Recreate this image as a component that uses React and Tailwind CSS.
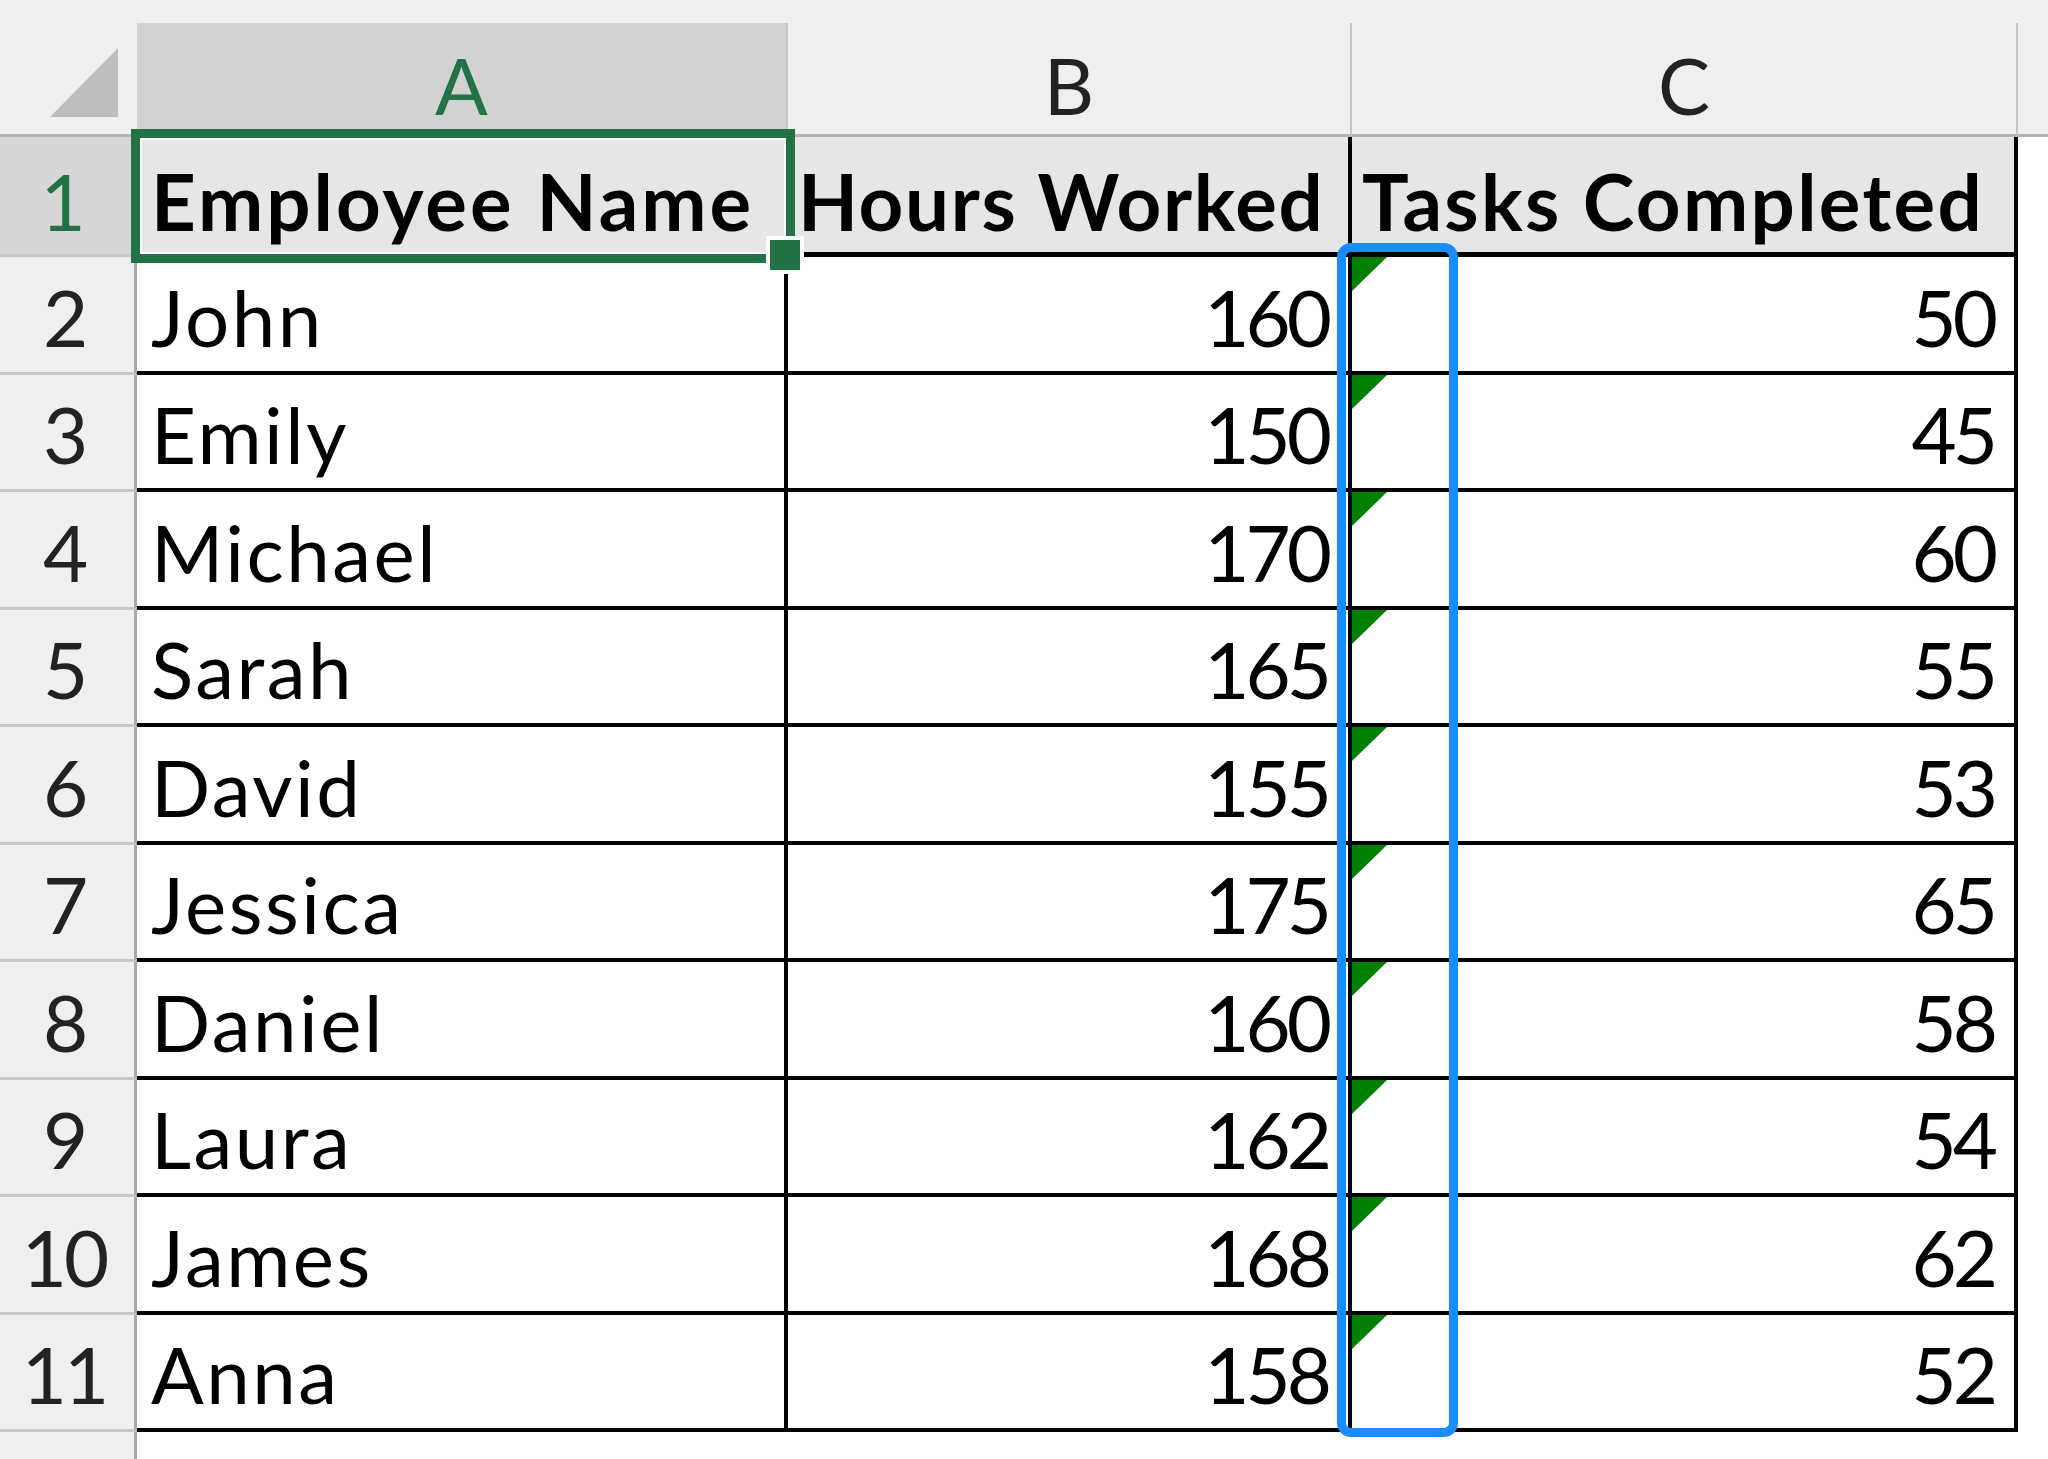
import React from 'react';

const rows = [
  ['John', 160, 50],
  ['Emily', 150, 45],
  ['Michael', 170, 60],
  ['Sarah', 165, 55],
  ['David', 155, 53],
  ['Jessica', 175, 65],
  ['Daniel', 160, 58],
  ['Laura', 162, 54],
  ['James', 168, 62],
  ['Anna', 158, 52],
];

function ErrorMark() {
  return (
    <svg className="absolute left-0 top-0" width="35" height="34" viewBox="0 0 35 34">
      <polygon points="0,0 35,0 0,34" fill="#008000" />
    </svg>
  );
}

function DataRow({ index, name, hours, tasks }) {
  const height = index % 2 === 0 ? 'h-[118px]' : 'h-[117px]';

  return (
    <div className={`flex ${height}`}>
      <div className="flex w-[137px] items-end justify-center border-r-[3px] border-b-[3px] border-r-[#a9a9a9] border-b-[#c8c8c8] bg-[#efefef] pr-[6px] pb-[16px] tracking-[-3px] text-[#222]">
        {index + 2}
      </div>
      <div className="flex w-[651px] items-end border-r-[4px] border-b-[4px] border-black pl-[14px] pb-[15px] tracking-[2.5px]">
        {name}
      </div>
      <div className="flex w-[564px] items-end justify-end border-r-[4px] border-b-[4px] border-black pr-[20px] pb-[15px] tracking-[-4px]">
        {hours}
      </div>
      <div className="relative flex w-[666px] items-end justify-end border-r-[4px] border-b-[4px] border-black pr-[20px] pb-[15px] tracking-[-4px]">
        <ErrorMark />
        {tasks}
      </div>
      <div className="flex-1" />
    </div>
  );
}

export default function App() {
  return (
    <div className="relative h-[1459px] w-[2048px] overflow-hidden bg-white font-['Lato',sans-serif] text-[78px] leading-none text-black">
      <div className="flex h-[137px] bg-[#efefef] text-[#222]">
        <div className="relative w-[137px] border-b-[3px] border-[#b4b4b4]">
          <svg className="absolute left-[50px] top-[48px]" width="68" height="69" viewBox="0 0 68 69">
            <polygon points="68,0 68,69 0,69" fill="#bdbdbd" />
          </svg>
        </div>
        <div className="mt-[23px] flex w-[651px] items-end justify-center border-r-[2px] border-b-[3px] border-r-[#c4c4c4] border-b-[#b4b4b4] bg-[#d2d2d2] pb-[10px] text-[#217346]">
          A
        </div>
        <div className="mt-[23px] flex w-[564px] items-end justify-center border-r-[2px] border-b-[3px] border-r-[#c4c4c4] border-b-[#b4b4b4] pb-[10px]">
          B
        </div>
        <div className="mt-[23px] flex w-[666px] items-end justify-center border-r-[2px] border-b-[3px] border-r-[#c4c4c4] border-b-[#b4b4b4] pb-[10px]">
          C
        </div>
        <div className="flex-1 border-b-[3px] border-[#b4b4b4]" />
      </div>

      <div className="flex h-[120px] font-bold">
        <div className="flex w-[137px] items-end justify-center border-r-[3px] border-b-[3px] border-r-[#a9a9a9] border-b-[#c8c8c8] bg-[#d6d6d6] pr-[8px] pb-[14px] font-normal text-[#217346]">
          1
        </div>
        <div className="flex w-[651px] items-end border-r-[4px] border-b-[5px] border-black bg-[#e7e6e6] pl-[14px] pb-[12px] tracking-[3px]">
          Employee Name
        </div>
        <div className="flex w-[564px] items-end border-r-[4px] border-b-[5px] border-black bg-[#e7e6e6] pl-[10px] pb-[12px] tracking-[1.7px]">
          Hours Worked
        </div>
        <div className="flex w-[666px] items-end border-r-[4px] border-b-[5px] border-black bg-[#e7e6e6] pl-[10px] pb-[12px] tracking-[2.3px]">
          Tasks Completed
        </div>
        <div className="flex-1" />
      </div>

      {rows.map(([name, hours, tasks], index) => (
        <DataRow key={name + index} index={index} name={name} hours={hours} tasks={tasks} />
      ))}

      <div className="flex h-[40px]">
        <div className="w-[137px] border-r-[3px] border-r-[#a9a9a9] bg-[#efefef]" />
        <div className="flex-1" />
      </div>

      <div className="absolute left-[131px] top-[129px] h-[134px] w-[664px] border-[9px] border-[#217346] shadow-[inset_0_0_0_2px_#ffffff]" />
      <div className="absolute left-[766px] top-[236px] h-[38px] w-[38px] border-[4px] border-white bg-[#217346]" />
      <div className="absolute left-[1337px] top-[243px] h-[1194px] w-[121px] rounded-[14px] border-[9px] border-[#1a8cff]" />
    </div>
  );
}
